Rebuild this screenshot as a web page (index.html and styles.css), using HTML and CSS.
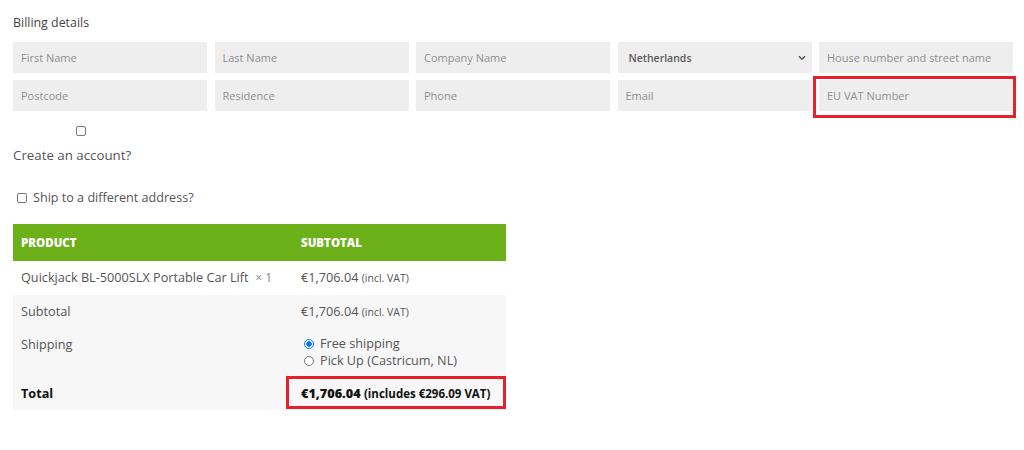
FILE: index.html
```html
<!DOCTYPE html>
<html lang="en">
<head>
<meta charset="utf-8">
<title>Checkout</title>
<link rel="stylesheet" href="styles.css">
</head>
<body>
<div class="checkout">
  <h3 class="section-title">Billing details</h3>
  <div class="fields">
    <div class="field"><input type="text" placeholder="First Name"></div>
    <div class="field"><input type="text" placeholder="Last Name"></div>
    <div class="field"><input type="text" placeholder="Company Name"></div>
    <div class="field select-field">
      <span class="select-value">Netherlands</span>
      <svg class="chevron" width="8" height="6" viewBox="0 0 8 6"><path d="M1 1.2 L4 4.2 L7 1.2" fill="none" stroke="#555" stroke-width="1.6"/></svg>
    </div>
    <div class="field"><input type="text" placeholder="House number and street name"></div>
    <div class="field"><input type="text" placeholder="Postcode"></div>
    <div class="field"><input type="text" placeholder="Residence"></div>
    <div class="field"><input type="text" placeholder="Phone"></div>
    <div class="field"><input type="text" placeholder="Email"></div>
    <div class="field highlighted"><input type="text" placeholder="EU VAT Number"><span class="mark mark-vat"></span></div>
  </div>

  <div class="account">
    <input type="checkbox" class="check account-check">
    <div class="account-label">Create an account?</div>
  </div>

  <label class="ship"><input type="checkbox" class="check"><span>Ship to a different address?</span></label>

  <table class="order">
    <thead>
      <tr><th class="col-product">Product</th><th>Subtotal</th></tr>
    </thead>
    <tbody>
      <tr class="item">
        <td>Quickjack BL-5000SLX Portable Car Lift&nbsp; <span class="qty">× 1</span></td>
        <td>€1,706.04 <small>(incl. VAT)</small></td>
      </tr>
    </tbody>
    <tfoot>
      <tr class="sub">
        <td>Subtotal</td>
        <td>€1,706.04 <small>(incl. VAT)</small></td>
      </tr>
      <tr class="shipping">
        <td>Shipping</td>
        <td>
          <label class="opt"><input type="radio" name="ship" class="radio" checked><span>Free shipping</span></label>
          <label class="opt"><input type="radio" name="ship" class="radio"><span>Pick Up (Castricum, NL)</span></label>
        </td>
      </tr>
      <tr class="total">
        <td>Total</td>
        <td class="total-cell"><strong>€1,706.04</strong> <small>(includes €296.09 VAT)</small><span class="mark mark-total"></span></td>
      </tr>
    </tfoot>
  </table>
</div>
</body>
</html>
```
FILE: styles.css
```css
html, body {
  margin: 0;
  padding: 0;
  background: #fff;
}

.checkout {
  padding: 14px 11px 0 13px;
  font-family: "Open Sans", "Noto Sans", sans-serif;
  color: #555;
}

.section-title {
  margin: 0 0 10px;
  font-size: 12.4px;
  line-height: 18px;
  font-weight: 400;
  color: #444;
}

.fields {
  display: grid;
  grid-template-columns: repeat(5, 1fr);
  grid-auto-rows: 31px;
  gap: 7px 7.5px;
}

.field {
  position: relative;
  background: #eeeeee;
}

.field input {
  display: block;
  box-sizing: border-box;
  width: 100%;
  height: 100%;
  border: 0;
  margin: 0;
  padding: 0 8px;
  background: transparent;
  font-family: "Open Sans", sans-serif;
  font-size: 11px;
  color: #555;
  outline: none;
}

.field input::placeholder {
  color: #8f8f8f;
}

.select-field {
  display: flex;
  align-items: center;
  justify-content: space-between;
  padding: 0 6px 0 11px;
}

.select-value {
  font-size: 10.5px;
  font-weight: 600;
  color: #5a5a5a;
}

.mark {
  position: absolute;
  border: 3px solid #e8202a;
  pointer-events: none;
}

.mark-vat {
  left: -6px;
  right: -3px;
  top: -4px;
  bottom: -7px;
}

.check {
  appearance: none;
  -webkit-appearance: none;
  box-sizing: border-box;
  width: 10px;
  height: 10px;
  margin: 0;
  border: 1px solid #777;
  border-radius: 2px;
  background: #fff;
}

.account {
  margin-top: 15px;
}

.account-check {
  display: block;
  margin-left: 63px;
}

.account-label {
  margin-top: 9px;
  font-size: 13.3px;
  line-height: 20px;
}

.ship {
  display: flex;
  align-items: center;
  gap: 6px;
  margin: 23px 0 0 4px;
  font-size: 12.6px;
  line-height: 20px;
}

.order {
  margin-top: 16px;
  width: 493px;
  border-collapse: collapse;
  font-size: 12.7px;
  line-height: 20px;
}

.order th {
  background: #6cb01a;
  color: #fff;
  text-transform: uppercase;
  text-align: left;
  font-size: 11.5px;
  font-weight: 800;
  height: 37px;
  padding: 0 8px;
  box-sizing: border-box;
}

.order .col-product {
  width: 280px;
}

.order td {
  padding: 6px 8px 8px;
  vertical-align: top;
  text-align: left;
}

.item td {
  padding-bottom: 7px;
}

.order small {
  font-size: 10.5px;
}

.qty {
  color: #888;
  font-size: 12px;
}

.order tfoot tr {
  background: #f7f7f7;
}

.sub td {
  padding-bottom: 7px;
}

.shipping td {
  padding-top: 6px;
  padding-bottom: 8px;
}

.shipping td:first-child {
  padding-top: 5px;
}

.opt {
  display: flex;
  align-items: center;
  gap: 6px;
  line-height: 17px;
  margin-left: 3px;
}

.radio {
  appearance: none;
  -webkit-appearance: none;
  box-sizing: border-box;
  width: 10px;
  height: 10px;
  margin: 0;
  border: 1px solid #777;
  border-radius: 50%;
  background: #fff;
}

.radio:checked {
  border-color: #0075ff;
  background: radial-gradient(circle, #0075ff 0 2.5px, #fff 3px);
}

.total td {
  padding: 6px 8px;
  font-weight: 700;
  color: #111;
}

.total-cell {
  position: relative;
  white-space: nowrap;
}

.total-cell strong {
  font-size: 12.7px;
}

.total small {
  font-size: 11.5px;
  font-weight: 700;
}

.mark-total {
  left: -7px;
  right: 0;
  top: -1px;
  bottom: 1px;
}
```
